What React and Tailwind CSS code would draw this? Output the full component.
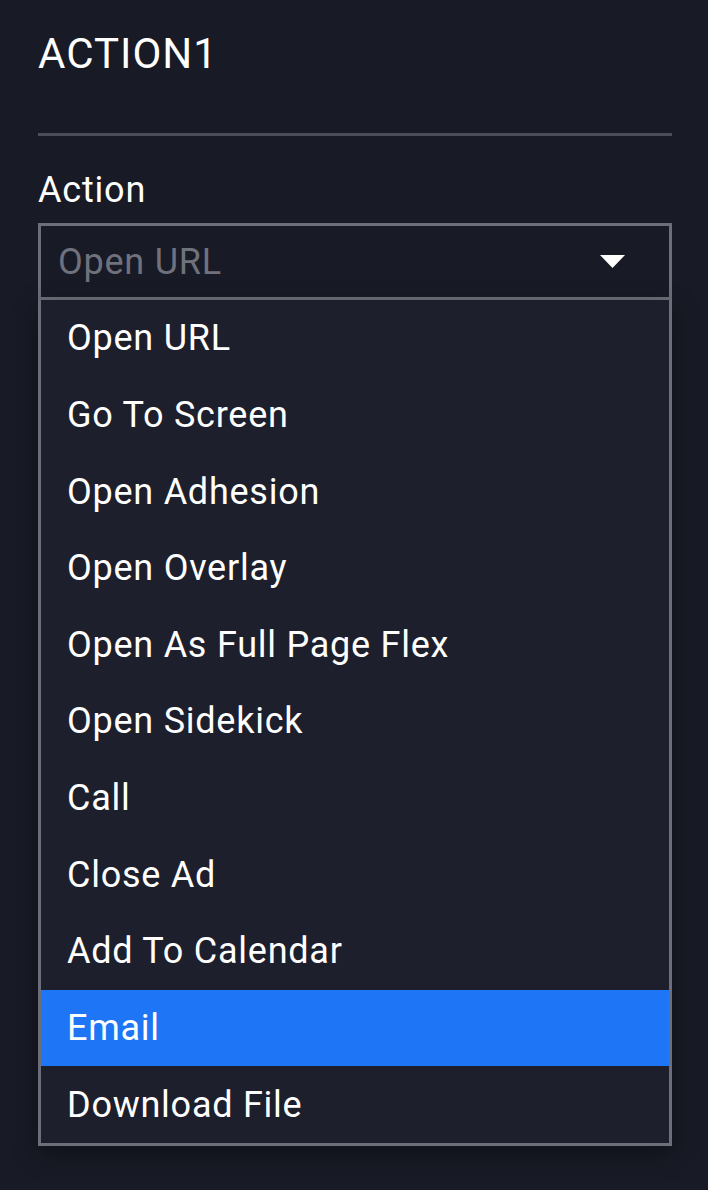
const options = [
  'Open URL',
  'Go To Screen',
  'Open Adhesion',
  'Open Overlay',
  'Open As Full Page Flex',
  'Open Sidekick',
  'Call',
  'Close Ad',
  'Add To Calendar',
  'Email',
  'Download File',
];

const App = () => {
  const selected = 'Email';

  return (
    <div className="min-h-[1190px] w-full bg-[#181a25] pl-[38px] pr-[36px] pt-[30px] font-['Roboto',sans-serif] text-white">
      <h1 className="text-[42px] leading-[48px] font-normal tracking-[1px]">ACTION1</h1>

      <div className="mt-[55px] h-[3px] bg-[#4b4d58]" />

      <label className="mt-[33px] block text-[36px] leading-[42px] tracking-[0.8px]">Action</label>

      <div className="relative mt-[12px]">
        {/* select trigger */}
        <div className="flex h-[77px] items-center justify-between border-[3px] border-[#6c6e79] bg-[#181a25] pl-[17px] pr-[44px]">
          <span className="text-[36px] leading-[42px] tracking-[0.75px] text-[#6f717d]">Open URL</span>
          <svg width="25" height="13" viewBox="0 0 25 13" className="block">
            <path d="M0 0 L25 0 L12.5 13 Z" fill="#ffffff" />
          </svg>
        </div>

        {/* open menu */}
        <ul className="border-x-[3px] border-b-[3px] border-[#6c6e79] bg-[#1e1f2c] shadow-[0_8px_24px_rgba(0,0,0,0.35)]">
          {options.map((opt) => (
            <li
              key={opt}
              className={`flex h-[76.64px] items-center pl-[26px] text-[36px] leading-[42px] tracking-[0.75px] ${
                opt === selected ? 'bg-[#1e76f6]' : ''
              }`}
            >
              {opt}
            </li>
          ))}
        </ul>
      </div>
    </div>
  );
};

export default App;
